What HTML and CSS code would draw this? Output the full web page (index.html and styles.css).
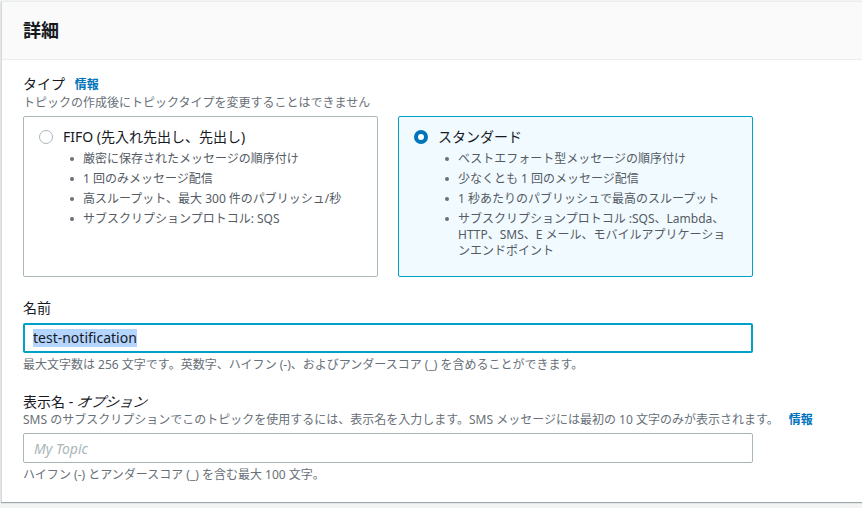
FILE: index.html
```html
<!DOCTYPE html>
<html lang="ja">
<head>
<meta charset="utf-8">
<title>詳細</title>
<link rel="stylesheet" href="styles.css">
</head>
<body>
<section class="container">
  <header class="container-header">
    <h2 class="title">詳細</h2>
  </header>
  <div class="container-body">
    <div class="field">
      <div class="label">タイプ <a class="info" href="#">情報</a></div>
      <div class="desc">トピックの作成後にトピックタイプを変更することはできません</div>
      <div class="tiles">
        <div class="tile">
          <div class="tile-head"><span class="radio"></span><span class="tile-title">FIFO (先入れ先出し、先出し)</span></div>
          <ul class="points">
            <li>厳密に保存されたメッセージの順序付け</li>
            <li>1 回のみメッセージ配信</li>
            <li>高スループット、最大 300 件のパブリッシュ/秒</li>
            <li>サブスクリプションプロトコル: SQS</li>
          </ul>
        </div>
        <div class="tile selected">
          <div class="tile-head"><span class="radio checked"></span><span class="tile-title">スタンダード</span></div>
          <ul class="points">
            <li>ベストエフォート型メッセージの順序付け</li>
            <li>少なくとも 1 回のメッセージ配信</li>
            <li>1 秒あたりのパブリッシュで最高のスループット</li>
            <li>サブスクリプションプロトコル :SQS、Lambda、<br>HTTP、SMS、E メール、モバイルアプリケーショ<br>ンエンドポイント</li>
          </ul>
        </div>
      </div>
    </div>

    <div class="field field-name">
      <div class="label">名前</div>
      <div class="input focused"><span class="selected-text">test-notification</span></div>
      <div class="hint">最大文字数は 256 文字です。英数字、ハイフン (-)、およびアンダースコア (_) を含めることができます。</div>
    </div>

    <div class="field field-display">
      <div class="label">表示名 - <i class="optional">オプション</i></div>
      <div class="desc">SMS のサブスクリプションでこのトピックを使用するには、表示名を入力します。SMS メッセージには最初の 10 文字のみが表示されます。<a class="info info-gap" href="#">情報</a></div>
      <div class="input"><span class="placeholder">My Topic</span></div>
      <div class="hint">ハイフン (-) とアンダースコア (_) を含む最大 100 文字。</div>
    </div>
  </div>
</section>
</body>
</html>
```

FILE: styles.css
```css
html, body {
  margin: 0;
  background: #f2f3f3;
  overflow: hidden;
}
body {
  padding: 1px 0 0 1px;
  font-family: "Noto Sans", "Noto Sans CJK JP", sans-serif;
  color: #16191f;
  height: 507px;
}
.container {
  width: 900px;
  background: #ffffff;
  border-top: 1px solid #eaeded;
  border-left: 1px solid #d5dbdb;
  box-shadow: 0 1px 1px 0 rgba(0, 28, 36, 0.35);
}
.container-header {
  background: #fafafa;
  border-bottom: 1px solid #eaeded;
  padding: 16px 21px 17px;
}
.title {
  margin: 0;
  font-size: 18px;
  line-height: 24px;
  font-weight: 700;
}
.container-body {
  padding: 14px 21px 19px;
}
.label {
  font-size: 14px;
  line-height: 20px;
}
.optional {
  font-style: italic;
  display: inline-block;
  transform: skewX(-10deg);
}
.info {
  color: #0073bb;
  font-size: 12px;
  font-weight: 700;
  text-decoration: none;
  margin-left: 6px;
}
.info-gap {
  margin-left: 10px;
}
.desc {
  font-size: 12px;
  line-height: 16px;
  color: #687078;
  white-space: nowrap;
}
.tiles {
  display: grid;
  grid-template-columns: 355px 355px;
  column-gap: 20px;
  margin-top: 5px;
}
.tile {
  height: 161px;
  box-sizing: border-box;
  border: 1px solid #aab7b8;
  border-radius: 2px;
  padding: 10px 15px;
  background: #ffffff;
}
.tile.selected {
  background: #f1faff;
  border-color: #00a1c9;
}
.tile-head {
  display: flex;
  align-items: center;
  gap: 10px;
  height: 20px;
}
.radio {
  width: 14px;
  height: 14px;
  box-sizing: border-box;
  border-radius: 50%;
  border: 1px solid #aab7b8;
  background: #ffffff;
  flex: none;
}
.radio.checked {
  border: 4px solid #0073bb;
}
.tile-title {
  font-size: 14px;
  line-height: 20px;
}
.points {
  list-style: none;
  margin: 0;
  padding: 0 0 0 44px;
}
.points li {
  position: relative;
  font-size: 12px;
  line-height: 16px;
  color: #545b64;
  margin-top: 4px;
  white-space: nowrap;
}
.points li::before {
  content: "";
  position: absolute;
  left: -13px;
  top: 6px;
  width: 4px;
  height: 4px;
  border-radius: 50%;
  background: #687078;
}
.field-name {
  margin-top: 21px;
}
.input {
  width: 730px;
  box-sizing: border-box;
  height: 30px;
  border: 1px solid #aab7b8;
  border-radius: 2px;
  padding: 0 10px;
  display: flex;
  align-items: center;
  font-size: 14px;
  background: #ffffff;
  margin-top: 5px;
}
.input.focused {
  border: 2px solid #00a1c9;
  padding: 0 8px;
}
.selected-text {
  background: #b4d5fe;
  color: #16191f;
  line-height: 18px;
}
.placeholder {
  color: #aab7b8;
  font-style: italic;
}
.hint {
  font-size: 12px;
  line-height: 16px;
  color: #687078;
  margin-top: 4px;
}
.field-display {
  margin-top: 19px;
}
```
